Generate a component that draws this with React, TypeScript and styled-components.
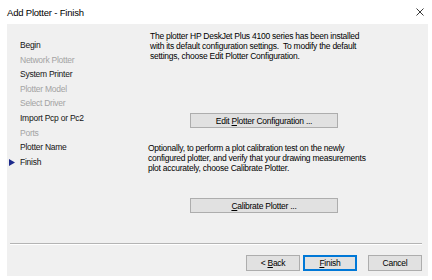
import styled, { createGlobalStyle } from 'styled-components'

const Global = createGlobalStyle`
	html, body {
		margin: 0;
		padding: 0;
		background: #ffffff;
	}
	body {
		font-family: 'Liberation Sans', Arial, sans-serif;
		color: #000;
	}
`

const Window = styled.div`
	width: 432px;
	height: 280px;
	display: flex;
	flex-direction: column;
	background: #fff;
	overflow: hidden;
`

const TitleBar = styled.div`
	height: 24px;
	display: flex;
	align-items: center;
	justify-content: space-between;
	padding: 0 8px 0 7px;
	font-size: 9.5px;
	letter-spacing: -0.2px;
	color: #000;
`

const Close = styled.svg`
	width: 8px;
	height: 8px;
`

const Panel = styled.div`
	margin: 0 4px 4px 7px;
	height: 252px;
	background: #f0f0f0;
	display: flex;
	flex-direction: column;
`

const Body = styled.div`
	height: 219px;
	display: flex;
`

const Nav = styled.ul`
	list-style: none;
	margin: 0;
	padding: 14px 0 0 0;
	width: 141px;
	flex: none;
`

const NavItem = styled.li<{ $off?: boolean }>`
	position: relative;
	height: 14.6px;
	line-height: 14.6px;
	padding-left: 13px;
	font-size: 8.5px;
	letter-spacing: -0.25px;
	color: ${(p) => (p.$off ? '#a3a3a3' : '#141414')};
`

const Arrow = styled.svg`
	position: absolute;
	left: 2px;
	top: 4px;
	width: 6px;
	height: 7px;
`

const Main = styled.div`
	flex: 1;
	display: flex;
	flex-direction: column;
	align-items: flex-start;
	padding-top: 7px;
	font-size: 8.5px;
	letter-spacing: -0.25px;
	line-height: 10px;
`

const Para = styled.p<{ $indent: number; $top?: number }>`
	margin: ${(p) => p.$top ?? 0}px 0 0 0;
	padding-left: ${(p) => p.$indent}px;
	width: 220px;
`

const Button = styled.button<{ $focus?: boolean }>`
	font-family: inherit;
	font-size: 8.5px;
	letter-spacing: -0.25px;
	color: #000;
	background: #e1e1e1;
	border: 1px solid ${(p) => (p.$focus ? '#0078d7' : '#adadad')};
	box-shadow: ${(p) => (p.$focus ? 'inset 0 0 0 1px #0078d7' : 'none')};
	border-radius: 0;
	padding: 0;
	margin: 0;
	height: 16px;
	width: 54px;
	u {
		text-decoration: underline;
	}
`

const WideButton = styled(Button)<{ $top: number }>`
	width: 148px;
	height: 15px;
	margin-left: 42px;
	margin-top: ${(p) => p.$top}px;
`

const Separator = styled.div`
	height: 0;
	border-top: 1px solid #b4b4b4;
	border-bottom: 1px solid #fff;
	margin: 0 6px 0 3px;
`

const Footer = styled.div`
	display: flex;
	justify-content: flex-end;
	padding: 10px 6px 0 0;
	gap: 3px;
`

const CancelButton = styled(Button)`
	margin-left: 8px;
`

const steps: [string, boolean][] = [
	['Begin', false],
	['Network Plotter', true],
	['System Printer', false],
	['Plotter Model', true],
	['Select Driver', true],
	['Import Pcp or Pc2', false],
	['Ports', true],
	['Plotter Name', false],
	['Finish', false],
]

export default function App() {
	return (
		<Window>
			<Global />
			<TitleBar>
				<span>Add Plotter - Finish</span>
				<Close viewBox="0 0 8 8">
					<path d="M0.5 0.5 L7.5 7.5 M7.5 0.5 L0.5 7.5" stroke="#222" strokeWidth="0.9" fill="none" />
				</Close>
			</TitleBar>
			<Panel>
				<Body>
					<Nav>
						{steps.map(([name, off]) => (
							<NavItem key={name} $off={off}>
								{name === 'Finish' && (
									<Arrow viewBox="0 0 6 7">
										<path d="M0 0 L6 3.5 L0 7 Z" fill="#1c2a8c" />
									</Arrow>
								)}
								{name}
							</NavItem>
						))}
					</Nav>
					<Main>
						<Para $indent={2}>
							The plotter HP DeskJet Plus 4100 series has been installed
							<br />
							with its default configuration settings.&nbsp; To modify the default
							<br />
							settings, choose Edit Plotter Configuration.
						</Para>
						<WideButton $top={52}>
							Edit <u>P</u>lotter Configuration ...
						</WideButton>
						<Para $indent={0} $top={15}>
							Optionally, to perform a plot calibration test on the newly
							<br />
							configured plotter, and verify that your drawing measurements
							<br />
							plot accurately, choose Calibrate Plotter.
						</Para>
						<WideButton $top={25}>
							<u>C</u>alibrate Plotter ...
						</WideButton>
					</Main>
				</Body>
				<Separator />
				<Footer>
					<Button>
						&lt; <u>B</u>ack
					</Button>
					<Button $focus>
						<u>F</u>inish
					</Button>
					<CancelButton>Cancel</CancelButton>
				</Footer>
			</Panel>
		</Window>
	)
}
